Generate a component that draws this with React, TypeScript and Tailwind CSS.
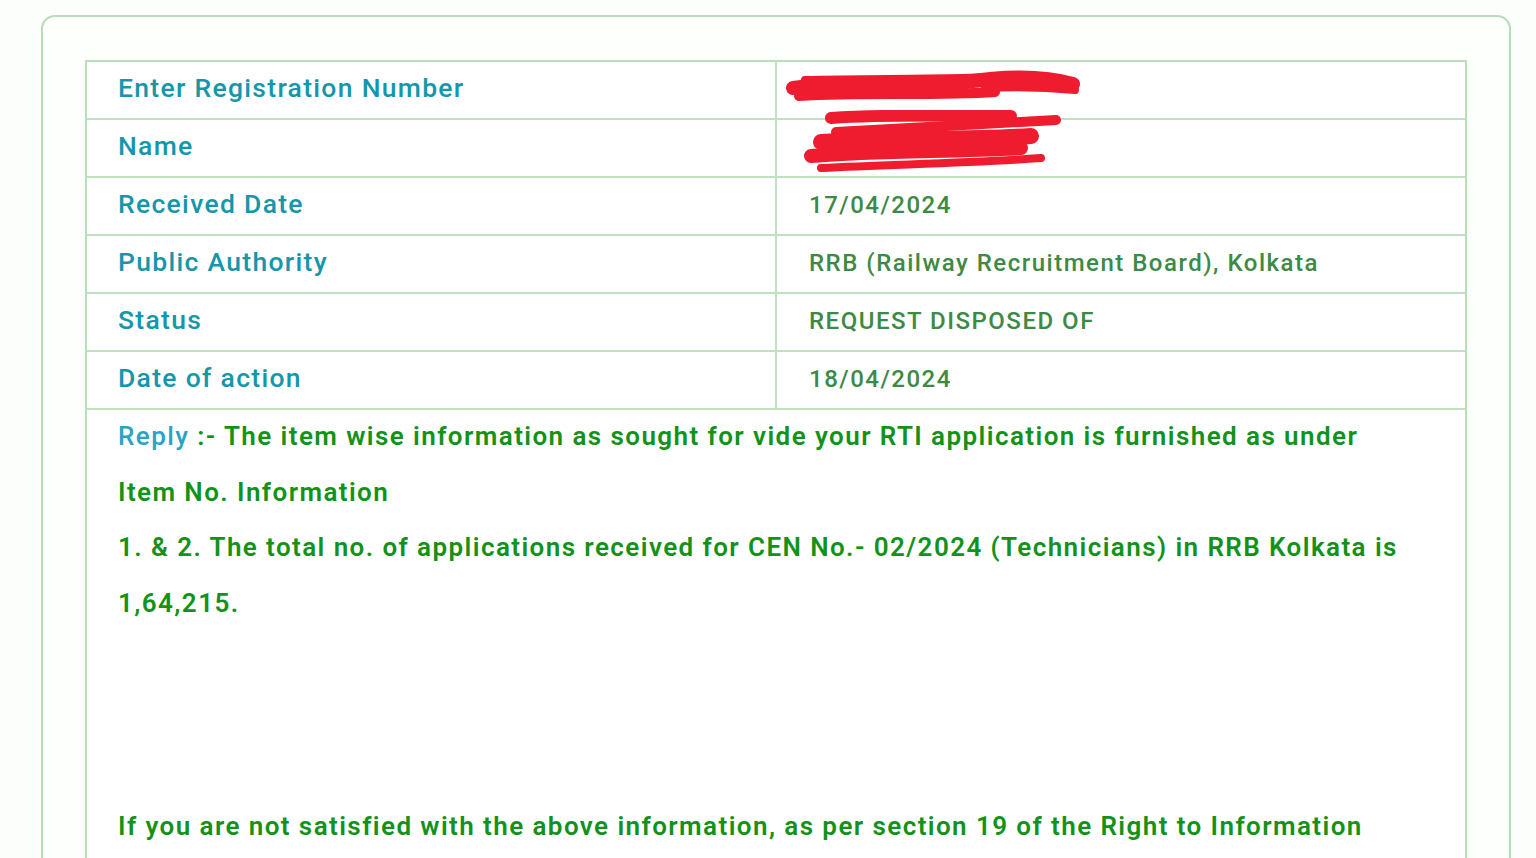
import React from "react";

const rows: [string, string | null][] = [
  ["Enter Registration Number", null],
  ["Name", null],
  ["Received Date", "17/04/2024"],
  ["Public Authority", "RRB (Railway Recruitment Board), Kolkata"],
  ["Status", "REQUEST DISPOSED OF"],
  ["Date of action", "18/04/2024"],
];

function Scribble1() {
  return (
    <svg width="300" height="40" viewBox="0 0 300 40" className="absolute left-[8px] top-[6px]">
      <g stroke="#ee1c2e" strokeLinecap="round" fill="none">
        <path d="M8 20 C60 12 120 18 180 14 C220 8 260 8 288 16" strokeWidth="14" />
        <path d="M14 28 C80 24 150 28 210 24" strokeWidth="10" />
        <path d="M20 12 C90 10 160 12 240 8" strokeWidth="8" />
        <path d="M200 20 C240 18 270 20 290 22" strokeWidth="8" />
      </g>
    </svg>
  );
}

function Scribble2() {
  return (
    <svg width="280" height="70" viewBox="0 0 280 70" className="absolute left-[14px] top-[-10px]">
      <g stroke="#ee1c2e" strokeLinecap="round" fill="none">
        <path d="M40 8 C100 4 160 6 220 6" strokeWidth="12" />
        <path d="M45 22 C120 18 190 14 265 10" strokeWidth="10" />
        <path d="M30 32 C100 28 180 30 240 26" strokeWidth="16" />
        <path d="M20 46 C90 40 160 42 230 38" strokeWidth="14" />
        <path d="M30 58 C100 54 170 54 250 48" strokeWidth="8" />
      </g>
    </svg>
  );
}

export default function App() {
  return (
    <div className="w-[1536px] h-[858px] overflow-hidden bg-[#fbfefb] pl-[41px] pt-[15px] pr-[25px]" style={{ fontFamily: "Roboto, 'Noto Sans', sans-serif" }}>
      <div className="h-[960px] rounded-t-[14px] border-2 border-[#b7dcb7] bg-[#fcfffc] pl-[42px] pr-[42px] pt-[43px]">
        <div className="border-2 border-[#b9deb9] bg-white">
          {rows.map(([label, value], i) => (
            <div key={label} className={`flex ${i > 0 ? "h-[58px] border-t-2 border-[#bfe1bf]" : "h-[56px]"}`}>
              <div className="w-[690px] shrink-0 border-r-2 border-[#bfe1bf] pl-[31px] pb-[4px] flex items-center text-[26.5px] font-medium tracking-[1.3px] text-[#1596ab]">
                {label}
              </div>
              <div className="relative flex-1 pl-[32px] pb-[2px] flex items-center text-[24px] font-medium text-[#3c8a45] tracking-[1.5px]">
                {value}
                {i === 0 && <Scribble1 />}
                {i === 1 && <Scribble2 />}
              </div>
            </div>
          ))}
          <div className="min-h-[500px] border-t-2 border-[#bfe1bf] pl-[31px] text-[26px] font-semibold leading-[55.7px] tracking-[1.42px] text-[#13921a]">
            <div className="-mt-[1px]">
              <div>
                <span className="text-[#2aa3c4] font-medium">Reply</span> :- The item wise information as sought for vide your RTI application is furnished as under
              </div>
              <div>Item No. Information</div>
              <div>1. &amp; 2. The total no. of applications received for CEN No.- 02/2024 (Technicians) in RRB Kolkata is</div>
              <div>1,64,215.</div>
              <div>&nbsp;</div>
              <div>&nbsp;</div>
              <div>&nbsp;</div>
              <div>If you are not satisfied with the above information, as per section 19 of the Right to Information</div>
            </div>
          </div>
        </div>
      </div>
    </div>
  );
}
